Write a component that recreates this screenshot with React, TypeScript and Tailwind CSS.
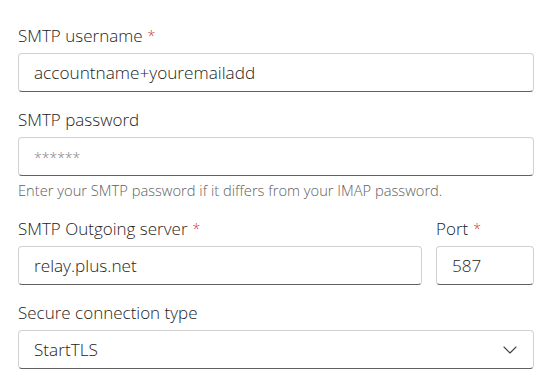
import { useState } from "react";

const font = { fontFamily: '"Segoe UI", "Open Sans", "Noto Sans", sans-serif' };

function Label({ text, required }: { text: string; required?: boolean }) {
  return (
    <label className="block h-[22px] leading-[22px] text-[17px] font-[350] text-[#242424] mb-[6px]">
      {text}
      {required && <span className="text-[#d13438] text-[14px] ml-[5px] align-top">*</span>}
    </label>
  );
}

function TextInput({
  value,
  placeholder,
  onChange,
}: {
  value: string;
  placeholder?: string;
  onChange: (v: string) => void;
}) {
  return (
    <div className="h-[39px] w-full rounded-[4px] border border-[#d1d1d1] border-b-[#616161] bg-white flex items-center px-[15px]">
      <input
        className="w-full bg-transparent outline-none text-[17.2px] font-[350] text-[#242424] placeholder:text-[#808080] placeholder:text-[14px]"
        style={font}
        value={value}
        placeholder={placeholder}
        onChange={(e) => onChange(e.target.value)}
      />
    </div>
  );
}

export default function App() {
  const [username, setUsername] = useState("accountname+youremailadd");
  const [password, setPassword] = useState("");
  const [server, setServer] = useState("relay.plus.net");
  const [port, setPort] = useState("587");

  return (
    <div className="w-[551px] h-[383px] bg-white px-[18px] pt-[25px] overflow-hidden" style={font}>
      {/* Username */}
      <div className="w-[516px]">
        <Label text="SMTP username" required />
        <TextInput value={username} onChange={setUsername} />
      </div>

      {/* Password */}
      <div className="w-[516px] mt-[17px]">
        <Label text="SMTP password" />
        <TextInput value={password} placeholder="******" onChange={setPassword} />
        <p className="mt-[6px] h-[16px] leading-[16px] text-[14.7px] font-[350] text-[#616161]">
          Enter your SMTP password if it differs from your IMAP password.
        </p>
      </div>

      {/* Server + port */}
      <div className="w-[516px] mt-[20px] flex gap-[14px]">
        <div className="flex-1">
          <Label text="SMTP Outgoing server" required />
          <TextInput value={server} onChange={setServer} />
        </div>
        <div className="w-[98px]">
          <Label text="Port" required />
          <TextInput value={port} onChange={setPort} />
        </div>
      </div>

      {/* Secure connection */}
      <div className="w-[516px] mt-[17px]">
        <Label text="Secure connection type" />
        <div className="h-[39px] w-full rounded-[4px] border border-[#d1d1d1] border-b-[#616161] bg-white flex items-center justify-between pl-[15px] pr-[16px]">
          <span className="text-[17.2px] font-[350] text-[#242424]">StartTLS</span>
          <svg width="14" height="8" viewBox="0 0 14 8" fill="none">
            <path d="M1 1l6 6 6-6" stroke="#424242" strokeWidth="1.1" strokeLinecap="round" strokeLinejoin="round" />
          </svg>
        </div>
      </div>
    </div>
  );
}
